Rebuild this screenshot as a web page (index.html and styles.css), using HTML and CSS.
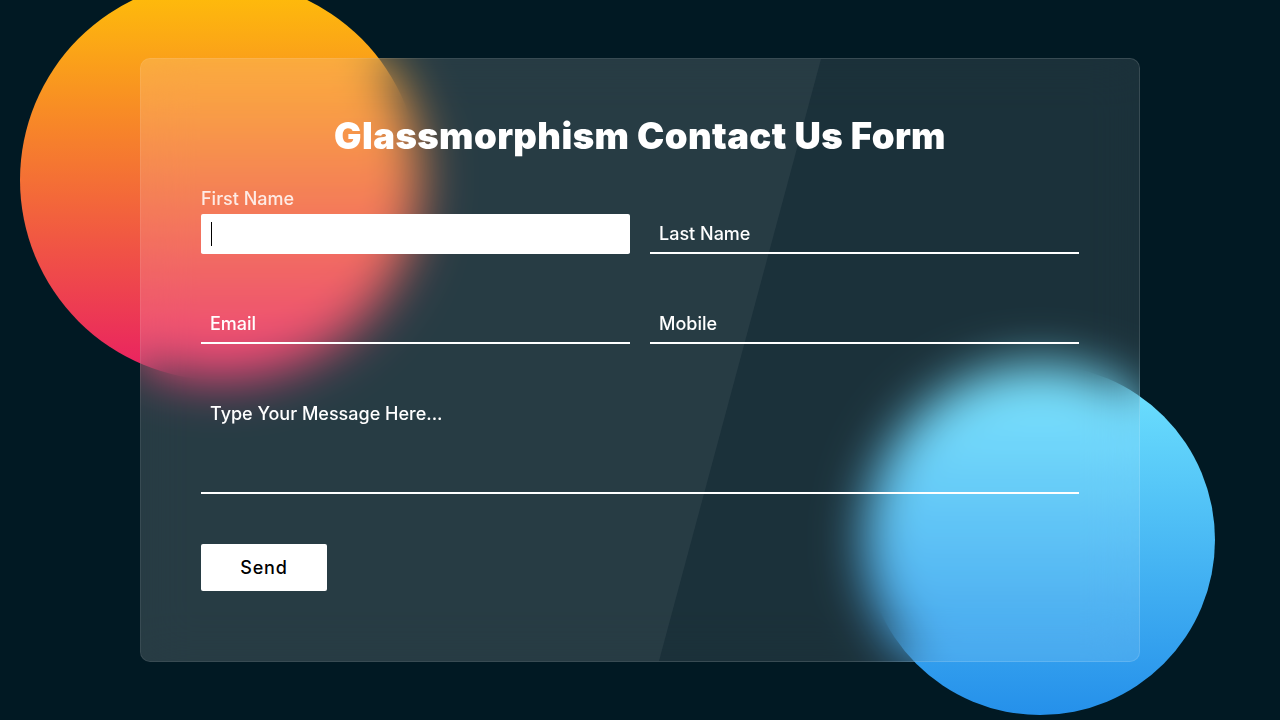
FILE: index.html
```html
<!DOCTYPE html>
<html lang="en">
<head>
    <meta charset="UTF-8">
    <meta name="viewport" content="width=device-width, initial-scale=1.0">
    <title>Glassmorphism Contact Us Form</title>
    <link rel="stylesheet" href="styles.css">
</head>
<body>
    <div class="circle circle-orange"></div>
    <div class="circle circle-blue"></div>

    <div class="contact-card">
        <h2>Glassmorphism Contact Us Form</h2>

        <form class="form-grid">
            <div class="field active">
                <label for="firstName">First Name</label>
                <input type="text" id="firstName">
                <span class="caret"></span>
            </div>
            <div class="field">
                <label for="lastName">Last Name</label>
                <input type="text" id="lastName">
            </div>
            <div class="field">
                <label for="email">Email</label>
                <input type="text" id="email">
            </div>
            <div class="field">
                <label for="mobile">Mobile</label>
                <input type="text" id="mobile">
            </div>
            <div class="field message">
                <label for="message">Type Your Message Here...</label>
                <textarea id="message"></textarea>
            </div>
            <div class="actions">
                <button type="button" class="send-button">Send</button>
            </div>
        </form>
    </div>
</body>
</html>
```

FILE: styles.css
```css
* {
    box-sizing: border-box;
}
body {
    margin: 0;
    height: 720px;
    overflow: hidden;
    display: flex;
    justify-content: center;
    align-items: center;
    background-color: #011923;
    font-family: Inter, "Noto Sans", sans-serif;
}
.circle {
    position: absolute;
    border-radius: 50%;
}
.circle-orange {
    left: 20px;
    top: -20px;
    width: 400px;
    height: 400px;
    background: linear-gradient(#ffc107, #e91e63);
}
.circle-blue {
    left: 865px;
    top: 365px;
    width: 350px;
    height: 350px;
    background: linear-gradient(#70e4ff, #2590ea);
}
.contact-card {
    position: relative;
    width: 1000px;
    height: 604px;
    padding: 60px;
    border: 1px solid rgba(255, 255, 255, 0.13);
    border-radius: 10px;
    background: rgba(255, 255, 255, 0.105);
    backdrop-filter: blur(25px);
    overflow: hidden;
}
/* lighter glass reflection on the left side */
.contact-card::before {
    content: "";
    position: absolute;
    inset: 0;
    background: rgba(255, 255, 255, 0.055);
    clip-path: polygon(0 0, 680px 0, 518px 100%, 0 100%);
}
.contact-card h2 {
    position: relative;
    margin: 0 0 61px;
    color: #fff;
    font-size: 36.5px;
    font-weight: 900;
    letter-spacing: 0.4px;
    line-height: 34px;
    text-align: center;
}
.form-grid {
    position: relative;
    display: grid;
    grid-template-columns: 1fr 1fr;
    gap: 50px 20px;
}
.field {
    position: relative;
    height: 40px;
}
.field input,
.field textarea {
    display: block;
    width: 100%;
    height: 100%;
    padding: 0 10px;
    border: none;
    border-bottom: 2px solid #fff;
    background: transparent;
    outline: none;
    resize: none;
}
.field label {
    position: absolute;
    left: 9px;
    top: 8px;
    color: #fff;
    font-size: 18px;
    font-weight: 500;
    line-height: 24px;
}
.field.active input {
    background: #fff;
    border-radius: 2px;
}
.field.active label {
    left: 0;
    top: -27px;
    color: rgba(255, 255, 255, 0.85);
}
.caret {
    position: absolute;
    left: 10px;
    top: 8px;
    width: 1px;
    height: 24px;
    background: #000;
}
.field.message {
    grid-column: 1 / 3;
    height: 100px;
}
.actions {
    grid-column: 1 / 3;
}
.send-button {
    display: block;
    width: 126px;
    height: 47px;
    border: none;
    border-radius: 2px;
    background: #fff;
    color: #000;
    font-family: inherit;
    font-size: 18px;
    font-weight: 500;
    letter-spacing: 0.8px;
}
```
